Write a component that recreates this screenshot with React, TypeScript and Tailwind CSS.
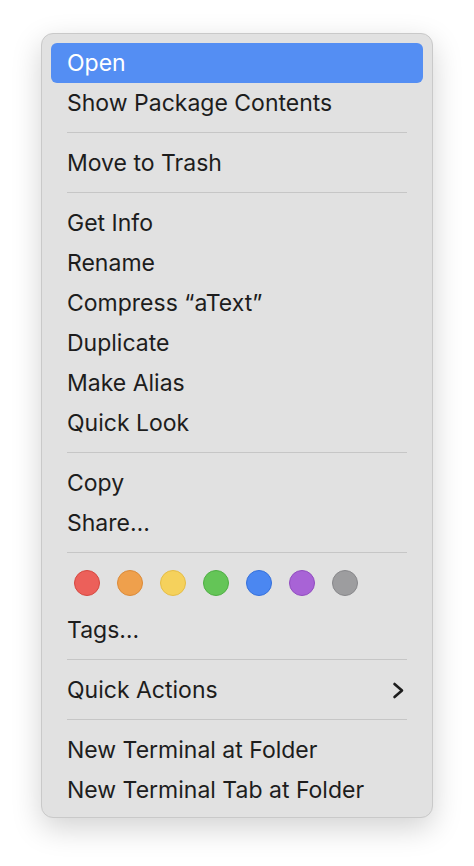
const tags = [
  { fill: "bg-[#ec605a]", ring: "border-[#d6473f]" },
  { fill: "bg-[#efa04c]", ring: "border-[#dc8a37]" },
  { fill: "bg-[#f5d15c]", ring: "border-[#e6bd44]" },
  { fill: "bg-[#64c557]", ring: "border-[#4eae43]" },
  { fill: "bg-[#4b87f1]", ring: "border-[#3470dc]" },
  { fill: "bg-[#a863d6]", ring: "border-[#914cc0]" },
  { fill: "bg-[#9d9d9f]", ring: "border-[#87878a]" },
];

function Item({ label, active, submenu }: { label: string; active?: boolean; submenu?: boolean }) {
  return (
    <div
      className={
        active
          ? "flex h-10 items-center justify-between rounded-md bg-[#548ef3] px-4 pt-px text-white"
          : "flex h-10 items-center justify-between px-4 pt-px text-[#1d1d1d]"
      }
    >
      <span>{label}</span>
      {submenu && (
        <svg width="13" height="17" viewBox="0 0 13 17" className="mr-0.5">
          <path d="M2.5 2 L10 8.5 L2.5 15" fill="none" stroke="#1d1d1d" strokeWidth="2.6" strokeLinecap="round" strokeLinejoin="round" />
        </svg>
      )}
    </div>
  );
}

function Sep() {
  return (
    <div className="px-4 pb-[10px] pt-[9px]">
      <div className="h-px bg-[#c6c6c6]" />
    </div>
  );
}

export default function App() {
  return (
    <div className="min-h-[866px] bg-white pl-[41px] pt-[33px] font-['Inter','Noto_Sans',sans-serif] text-[23px] leading-none">
      <div className="w-[392px] rounded-[12px] border border-[#c9c9c9] bg-[#e1e1e1] px-[9px] pb-[7px] pt-[9px] shadow-[0_10px_30px_rgba(0,0,0,0.18)]">
        <Item label="Open" active />
        <Item label="Show Package Contents" />
        <Sep />
        <Item label="Move to Trash" />
        <Sep />
        <Item label="Get Info" />
        <Item label="Rename" />
        <Item label="Compress “aText”" />
        <Item label="Duplicate" />
        <Item label="Make Alias" />
        <Item label="Quick Look" />
        <Sep />
        <Item label="Copy" />
        <Item label="Share…" />
        <Sep />
        <div className="flex h-[47px] items-center gap-[17px] pl-[23px] pb-[7px]">
          {tags.map((t, i) => (
            <div key={i} className={`h-[26px] w-[26px] rounded-full border-[1.5px] ${t.fill} ${t.ring}`} />
          ))}
        </div>
        <Item label="Tags…" />
        <Sep />
        <Item label="Quick Actions" submenu />
        <Sep />
        <Item label="New Terminal at Folder" />
        <Item label="New Terminal Tab at Folder" />
      </div>
    </div>
  );
}
